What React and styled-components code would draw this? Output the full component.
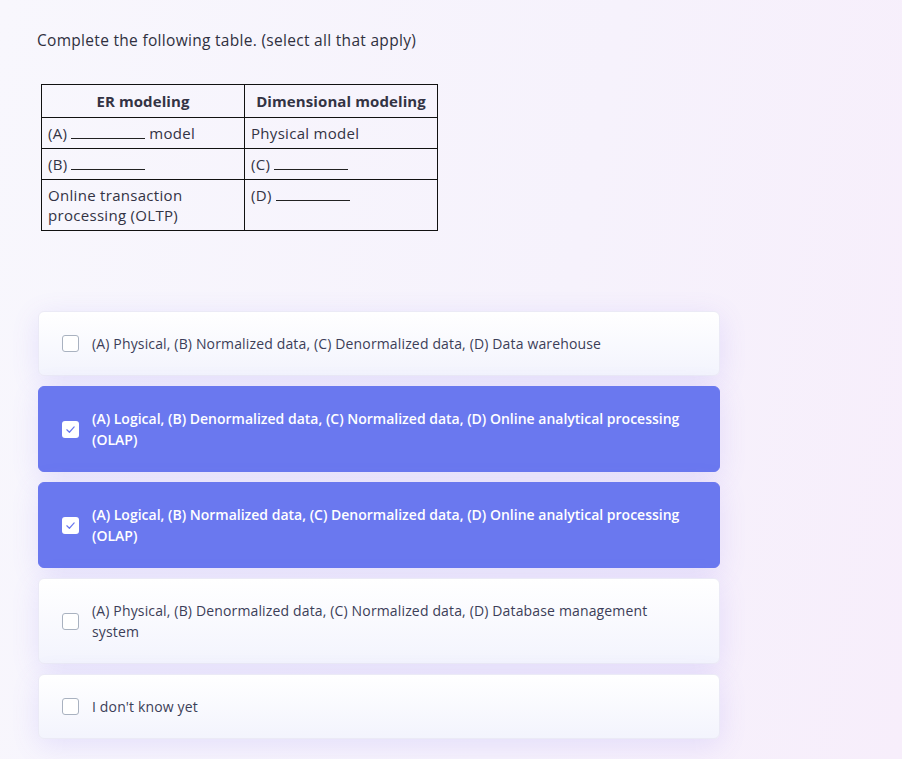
import React from 'react';
import styled, { createGlobalStyle } from 'styled-components';

const GlobalStyle = createGlobalStyle`
  html, body {
    margin: 0;
    padding: 0;
  }
  body {
    font-family: "Open Sans", "Noto Sans", sans-serif;
    color: #2f3040;
    background: linear-gradient(100deg, #f8f7fd 0%, #f6f2fc 60%, #f7eefb 100%);
    min-height: 759px;
  }
`;

const Page = styled.div`
  padding: 29px 0 20px 37px;
  width: 683px;
`;

const Prompt = styled.p`
  margin: 0 0 33px 0;
  font-size: 15.5px;
  letter-spacing: 0.3px;
  line-height: 22px;
  color: #2f3040;
`;

const Table = styled.table`
  border-collapse: collapse;
  margin-left: 4px;
  font-size: 15px;
  letter-spacing: 0.3px;
  color: #333344;
  margin-bottom: 80px;
`;

const Th = styled.th`
  border: 1px solid #111;
  height: 33px;
  padding: 0 6px;
  font-weight: 700;
  text-align: center;
  letter-spacing: 0.1px;
  width: ${p => p.$w}px;
  box-sizing: border-box;
`;

const Td = styled.td`
  border: 1px solid #111;
  padding: 5px 6px 5px;
  vertical-align: top;
  line-height: 20px;
`;

const Blank = styled.span`
  display: inline-block;
  width: 74px;
  border-bottom: 1px solid #222;
  margin: 0 4px 0 4px;
`;

const Options = styled.div`
  display: flex;
  flex-direction: column;
  gap: 10px;
  margin-left: 1px;
`;

const Card = styled.div`
  display: flex;
  align-items: center;
  gap: 13px;
  min-height: ${p => p.$tall ? 86 : 65}px;
  box-sizing: border-box;
  padding: 0 20px 0 23px;
  border-radius: 6px;
  background: ${p => p.$on ? '#6a78ef' : 'linear-gradient(180deg, #ffffff 0%, #f3f4fd 100%)'};
  border: 1px solid ${p => p.$on ? '#6a78ef' : '#ebeaf6'};
  box-shadow: 0 6px 28px rgba(110, 95, 240, 0.14);
  color: ${p => p.$on ? '#ffffff' : '#3c3e58'};
`;

const Box = styled.span`
  flex: none;
  width: 17px;
  height: 17px;
  box-sizing: border-box;
  border-radius: 3px;
  background: #fff;
  border: ${p => p.$on ? 'none' : '1.5px solid #a9b2c0'};
  display: flex;
  align-items: center;
  justify-content: center;
`;

const Label = styled.span`
  font-size: 14px;
  letter-spacing: ${p => p.$on ? 0 : 0.15}px;
  font-weight: ${p => p.$on ? 600 : 500};
  line-height: 21px;
  max-width: 598px;
`;

const Check = () => (
  <svg width="11" height="11" viewBox="0 0 12 12" fill="none">
    <path d="M2 6.3 L4.8 9 L10 3.2" stroke="#6a78ef" strokeWidth="1.3" strokeLinecap="round" strokeLinejoin="round" />
  </svg>
);

const options = [
  { text: '(A) Physical, (B) Normalized data, (C) Denormalized data, (D) Data warehouse' },
  { text: '(A) Logical, (B) Denormalized data, (C) Normalized data, (D) Online analytical processing (OLAP)', on: true, tall: true },
  { text: '(A) Logical, (B) Normalized data, (C) Denormalized data, (D) Online analytical processing (OLAP)', on: true, tall: true },
  { text: '(A) Physical, (B) Denormalized data, (C) Normalized data, (D) Database management system', tall: true },
  { text: "I don't know yet" },
];

export default function App() {
  return (
    <>
      <GlobalStyle />
      <Page>
        <Prompt>Complete the following table. (select all that apply)</Prompt>
        <Table>
          <thead>
            <tr>
              <Th $w={203}>ER modeling</Th>
              <Th $w={193}>Dimensional modeling</Th>
            </tr>
          </thead>
          <tbody>
            <tr>
              <Td>(A)<Blank />model</Td>
              <Td>Physical model</Td>
            </tr>
            <tr>
              <Td>(B)<Blank /></Td>
              <Td>(C)<Blank /></Td>
            </tr>
            <tr>
              <Td>Online transaction<br />processing (OLTP)</Td>
              <Td>(D)<Blank /></Td>
            </tr>
          </tbody>
        </Table>
        <Options>
          {options.map((o, i) => (
            <Card key={i} $on={o.on} $tall={o.tall}>
              <Box $on={o.on}>{o.on && <Check />}</Box>
              <Label $on={o.on}>{o.text}</Label>
            </Card>
          ))}
        </Options>
      </Page>
    </>
  );
}
